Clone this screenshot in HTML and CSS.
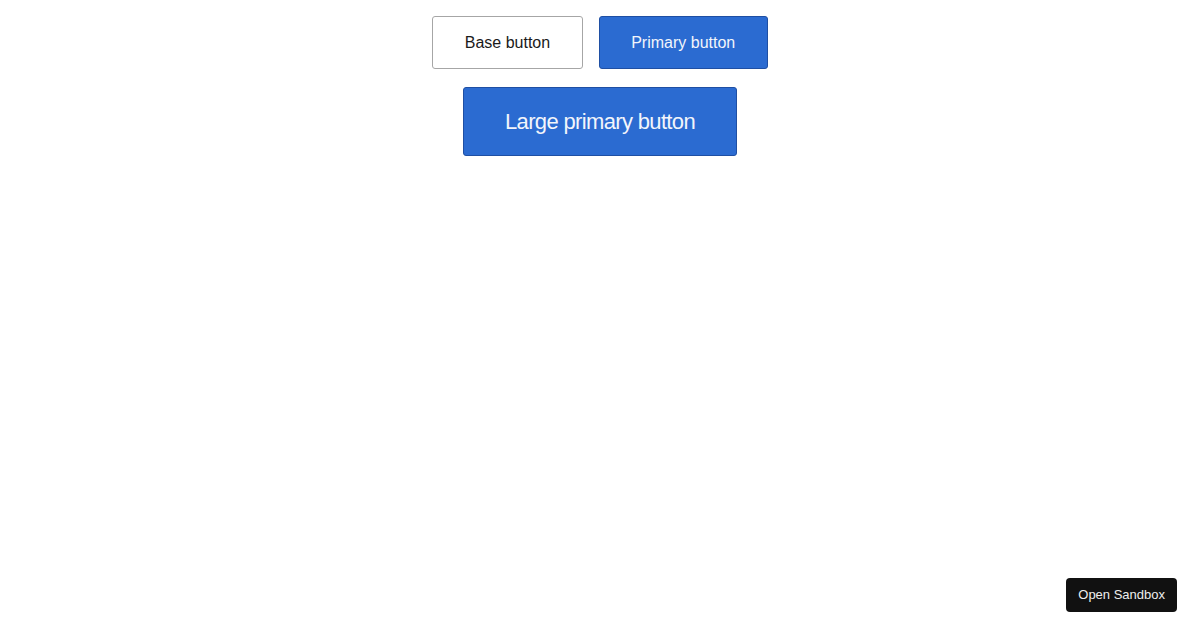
FILE: index.html
```html
<!DOCTYPE html>
<html>
<head>
<meta charset="utf-8">
<link rel="stylesheet" href="styles.css">
</head>
<body>
<main class="stack">
  <div class="row">
    <button class="btn">Base button</button>
    <button class="btn btn-primary">Primary button</button>
  </div>
  <div class="row">
    <button class="btn btn-primary btn-large">Large primary button</button>
  </div>
</main>
<a class="sandbox">Open Sandbox</a>
</body>
</html>
```
FILE: styles.css
```css
html, body {
  margin: 0;
  padding: 0;
  background: #fff;
}
body {
  font-family: "Liberation Sans", Arial, sans-serif;
}
.stack {
  display: flex;
  flex-direction: column;
  align-items: center;
  gap: 18px;
  padding-top: 16px;
}
.row {
  display: flex;
  gap: 16px;
  justify-content: center;
}
.btn {
  font-family: "Liberation Sans", Arial, sans-serif;
  font-size: 16px;
  line-height: 19px;
  padding: 16px 31.5px;
  border: 1px solid #a6a6a6;
  border-radius: 3px;
  background: #fff;
  color: #1a1a1a;
  margin: 0;
}
.btn-primary {
  background: #2b6bd1;
  border-color: #1f4fa3;
  color: #f2f5fb;
}
.btn-large {
  font-size: 22px;
  line-height: 25px;
  letter-spacing: -0.65px;
  padding: 21px 41px;
}
.sandbox {
  position: fixed;
  right: 23px;
  bottom: 18px;
  background: #111;
  color: #eee;
  font-family: "Liberation Sans", Arial, sans-serif;
  font-size: 13px;
  line-height: 15px;
  padding: 9px 12px 10px;
  border-radius: 4px;
}
```
